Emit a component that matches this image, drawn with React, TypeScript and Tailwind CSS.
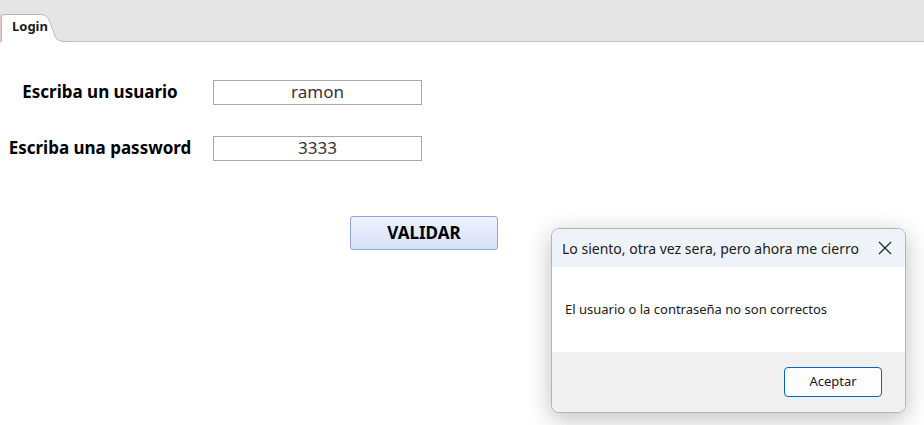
import React from "react";

const font = { fontFamily: '"Noto Sans", "Open Sans", sans-serif' };

function Field({ label, value }: { label: string; value: string }) {
  return (
    <div className="flex h-[26px] items-center">
      <div className="w-[213px] pr-[13px] text-center text-[17px] font-bold text-black">{label}</div>
      <div className="flex h-[25px] w-[209px] items-center justify-center border border-[#a9a9a9] bg-white text-[17px] text-[#333]">
        {value}
      </div>
    </div>
  );
}

export default function App() {
  return (
    <div className="relative h-[425px] w-[924px] overflow-hidden bg-white" style={font}>
      {/* tab strip */}
      <div className="relative h-[42px] border-b border-[#c4c4c4] bg-[#e5e5e5]">
        <div className="absolute left-0 top-[14px] h-[28px] w-[2px] bg-[#e7c6cc]" />
        <svg className="absolute left-[1px] top-[13px]" width="66" height="30" viewBox="0 0 66 30">
          <path d="M0 29 V4 Q0 1 3 1 H40 Q46 1 49 8 L55 24 Q57 28 63 28.5 H66 V30 H0 Z" fill="#fff" />
          <path d="M0.5 29 V4 Q0.5 1.5 3 1.5 H40 Q45.5 1.5 48.5 8 L54.5 24 Q56.5 28 63 28.5 H66" fill="none" stroke="#b8b8b8" />
        </svg>
        <span className="absolute left-[12px] top-[17px] text-[13px] font-bold text-[#1a1a1a]">Login</span>
      </div>

      {/* form */}
      <div className="flex flex-col gap-[30px] pt-[37px]">
        <Field label="Escriba un usuario" value="ramon" />
        <Field label="Escriba una password" value="3333" />
      </div>
      <div className="mt-[55px] flex pl-[350px]">
        <button className="h-[34px] w-[148px] rounded-[3px] border border-[#8ea6d8] bg-gradient-to-b from-[#eef2fc] to-[#d5e1f7] text-[17px] font-bold text-black">
          VALIDAR
        </button>
      </div>

      {/* message box */}
      <div className="absolute left-[551px] top-[228px] flex h-[185px] w-[355px] flex-col overflow-hidden rounded-[8px] border border-[#b5b5b5] bg-white shadow-[0_6px_24px_rgba(0,0,0,0.25)]">
        <div className="flex h-[38px] items-center justify-between bg-[#edf3f8] pl-[10px] pr-[13px]">
          <span className="text-[14px] text-[#1a1a1a]">Lo siento, otra vez sera, pero ahora me cierro</span>
          <svg width="14" height="14" viewBox="0 0 14 14">
            <path d="M1 1 L13 13 M13 1 L1 13" stroke="#222" strokeWidth="1.2" fill="none" />
          </svg>
        </div>
        <div className="flex h-[85px] items-center pl-[13px] text-[13px] text-[#1a1a1a]">
          El usuario o la contraseña no son correctos
        </div>
        <div className="flex flex-1 items-center justify-end bg-[#f0f0f0] pr-[23px]">
          <button className="h-[30px] w-[98px] rounded-[4px] border border-[#0067c0] bg-[#fdfdfd] text-[13px] text-[#1a1a1a]">
            Aceptar
          </button>
        </div>
      </div>
    </div>
  );
}
